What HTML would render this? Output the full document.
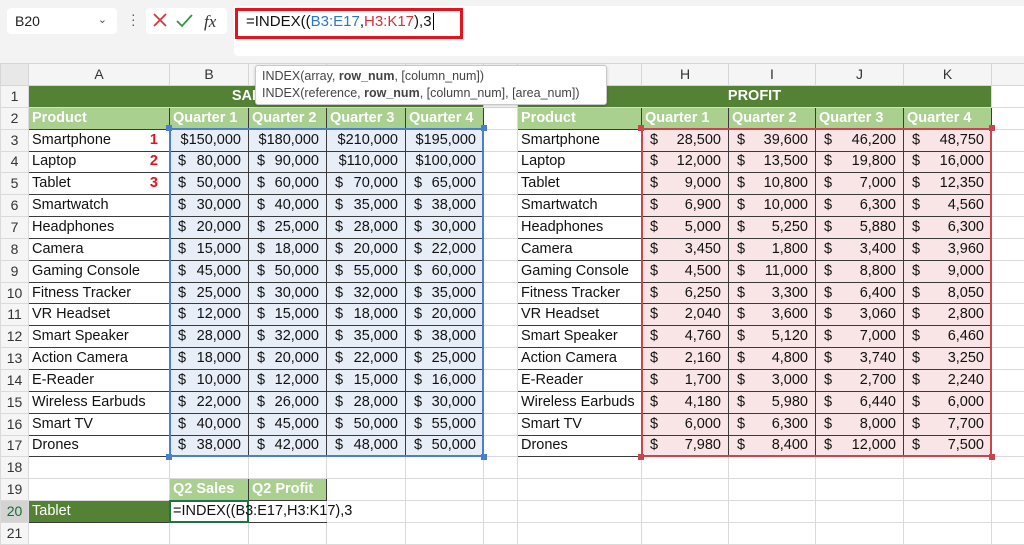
<!DOCTYPE html>
<html><head><meta charset="utf-8"><style>
*{box-sizing:border-box;margin:0;padding:0}
body{width:1024px;height:543px;overflow:hidden;background:#fff;font-family:"Liberation Sans",sans-serif;position:relative}
.top{position:absolute;left:0;top:0;width:1024px;height:63px;background:#f3f3f3}
.nb{position:absolute;left:7px;top:8px;width:110px;height:26px;background:#fff;border-radius:4px;font-size:14px;padding:5px 0 0 8px;color:#222}
.nb i{position:absolute;right:10px;top:5px;font-style:normal;font-size:11px;color:#555}
.dots{position:absolute;left:131px;top:12px;width:3px;font-size:14px;line-height:5px;color:#555}
.btns{position:absolute;left:146px;top:8px;width:81px;height:26px;background:#fff;border-radius:4px}
.fx{position:absolute;left:234px;top:6px;width:790px;height:50px;background:#fff;border-radius:4px 0 0 4px}
.red{position:absolute;left:235px;top:8px;width:228px;height:31px;border:3px solid #e5131d}
.ftext{position:absolute;left:246px;top:13px;font-size:15px;color:#111}
table{position:absolute;left:0;top:63px;width:1024px;border-collapse:collapse;table-layout:fixed;font-size:14.5px}
td{border:1px solid #dadada;height:21.85px;padding:0 3px;white-space:nowrap;overflow:hidden;color:#111;line-height:19px}
tr.h td{height:22px;background:#f5f5f5;color:#333;text-align:center;font-size:14px;border-color:#d6d6d6}
td.r{background:#f5f5f5;text-align:center;color:#333;font-size:14px;padding:0}
td.sel{background:#d3d3d3;color:#1e6b2f}
.dg{background:#548235;color:#fff;font-weight:bold;text-align:center}
.lg{background:#a9d08e;color:#fff;font-weight:bold;border:1px solid #3a3a3a}
.d{border:1px solid #3a3a3a}
.b{background:#e8eef8}
.p{background:#f9e5e5}
.m{text-align:right;padding-right:7px}
.m span{float:left;padding-left:5px}
.n{color:#e5131d;font-weight:bold;float:right;padding-right:8px}
.tip{position:absolute;left:255px;top:65px;width:352px;height:40px;background:#fff;border:1px solid #c8c8c8;border-radius:3px;font-size:12.5px;color:#444;padding:2px 0 0 6px;line-height:17px;box-shadow:0 1px 3px rgba(0,0,0,.2)}
.selb{position:absolute;left:169px;top:128px;width:315px;height:329px;border:2px solid #4a7fd0}
.selr{position:absolute;left:641px;top:128px;width:351px;height:329px;border:2px solid #c9464f}
.sq{position:absolute;width:6px;height:6px}
</style></head><body>
<div class="top">
 <div class="nb">B20<i>&#8964;</i></div>
 <div class="dots">·<br>·<br>·</div>
 <div class="btns">
  <svg width="81" height="26"><path d="M8 6 L20 18 M20 6 L8 18" stroke="#e0323a" stroke-width="1.8"/><path d="M31 13 L36 18 L46 7" stroke="#2e9a3e" stroke-width="1.8" fill="none"/><text x="58" y="19" font-family="Liberation Serif" font-style="italic" font-size="17" fill="#333">fx</text></svg>
 </div>
 <div class="fx"></div>
 <div class="red"></div>
 <div class="ftext">=INDEX((<span style="color:#2b78c8">B3:E17</span>,<span style="color:#d6303a">H3:K17</span>),3<span style="border-left:1px solid #000;margin-left:1px"></span></div>
</div>
<table>
<colgroup><col style="width:28px"><col style="width:141px"><col style="width:79px"><col style="width:78px"><col style="width:79px"><col style="width:78px"><col style="width:34px"><col style="width:124px"><col style="width:87px"><col style="width:87px"><col style="width:88px"><col style="width:88px"><col style="width:33px"></colgroup>
<tr class="h"><td style="background:#e8e8e8"></td><td>A</td><td class="sel">B</td><td>C</td><td>D</td><td>E</td><td>F</td><td>G</td><td>H</td><td>I</td><td>J</td><td>K</td><td></td></tr>
<tr><td class="r">1</td><td colspan="5" class="dg">SALES</td><td></td><td colspan="5" class="dg">PROFIT</td><td></td></tr>
<tr><td class="r">2</td><td class="lg">Product</td><td class="lg">Quarter 1</td><td class="lg">Quarter 2</td><td class="lg">Quarter 3</td><td class="lg">Quarter 4</td><td></td><td class="lg">Product</td><td class="lg">Quarter 1</td><td class="lg">Quarter 2</td><td class="lg">Quarter 3</td><td class="lg">Quarter 4</td><td></td></tr>
<tr><td class="r">3</td><td class="d">Smartphone<span class="n">1</span></td><td class="d b m">$150,000</td><td class="d b m">$180,000</td><td class="d b m">$210,000</td><td class="d b m">$195,000</td><td></td><td class="d">Smartphone</td><td class="d p m"><span>$</span>28,500</td><td class="d p m"><span>$</span>39,600</td><td class="d p m"><span>$</span>46,200</td><td class="d p m"><span>$</span>48,750</td><td></td></tr>
<tr><td class="r">4</td><td class="d">Laptop<span class="n">2</span></td><td class="d b m"><span>$</span>80,000</td><td class="d b m"><span>$</span>90,000</td><td class="d b m">$110,000</td><td class="d b m">$100,000</td><td></td><td class="d">Laptop</td><td class="d p m"><span>$</span>12,000</td><td class="d p m"><span>$</span>13,500</td><td class="d p m"><span>$</span>19,800</td><td class="d p m"><span>$</span>16,000</td><td></td></tr>
<tr><td class="r">5</td><td class="d">Tablet<span class="n">3</span></td><td class="d b m"><span>$</span>50,000</td><td class="d b m"><span>$</span>60,000</td><td class="d b m"><span>$</span>70,000</td><td class="d b m"><span>$</span>65,000</td><td></td><td class="d">Tablet</td><td class="d p m"><span>$</span>9,000</td><td class="d p m"><span>$</span>10,800</td><td class="d p m"><span>$</span>7,000</td><td class="d p m"><span>$</span>12,350</td><td></td></tr>
<tr><td class="r">6</td><td class="d">Smartwatch</td><td class="d b m"><span>$</span>30,000</td><td class="d b m"><span>$</span>40,000</td><td class="d b m"><span>$</span>35,000</td><td class="d b m"><span>$</span>38,000</td><td></td><td class="d">Smartwatch</td><td class="d p m"><span>$</span>6,900</td><td class="d p m"><span>$</span>10,000</td><td class="d p m"><span>$</span>6,300</td><td class="d p m"><span>$</span>4,560</td><td></td></tr>
<tr><td class="r">7</td><td class="d">Headphones</td><td class="d b m"><span>$</span>20,000</td><td class="d b m"><span>$</span>25,000</td><td class="d b m"><span>$</span>28,000</td><td class="d b m"><span>$</span>30,000</td><td></td><td class="d">Headphones</td><td class="d p m"><span>$</span>5,000</td><td class="d p m"><span>$</span>5,250</td><td class="d p m"><span>$</span>5,880</td><td class="d p m"><span>$</span>6,300</td><td></td></tr>
<tr><td class="r">8</td><td class="d">Camera</td><td class="d b m"><span>$</span>15,000</td><td class="d b m"><span>$</span>18,000</td><td class="d b m"><span>$</span>20,000</td><td class="d b m"><span>$</span>22,000</td><td></td><td class="d">Camera</td><td class="d p m"><span>$</span>3,450</td><td class="d p m"><span>$</span>1,800</td><td class="d p m"><span>$</span>3,400</td><td class="d p m"><span>$</span>3,960</td><td></td></tr>
<tr><td class="r">9</td><td class="d">Gaming Console</td><td class="d b m"><span>$</span>45,000</td><td class="d b m"><span>$</span>50,000</td><td class="d b m"><span>$</span>55,000</td><td class="d b m"><span>$</span>60,000</td><td></td><td class="d">Gaming Console</td><td class="d p m"><span>$</span>4,500</td><td class="d p m"><span>$</span>11,000</td><td class="d p m"><span>$</span>8,800</td><td class="d p m"><span>$</span>9,000</td><td></td></tr>
<tr><td class="r">10</td><td class="d">Fitness Tracker</td><td class="d b m"><span>$</span>25,000</td><td class="d b m"><span>$</span>30,000</td><td class="d b m"><span>$</span>32,000</td><td class="d b m"><span>$</span>35,000</td><td></td><td class="d">Fitness Tracker</td><td class="d p m"><span>$</span>6,250</td><td class="d p m"><span>$</span>3,300</td><td class="d p m"><span>$</span>6,400</td><td class="d p m"><span>$</span>8,050</td><td></td></tr>
<tr><td class="r">11</td><td class="d">VR Headset</td><td class="d b m"><span>$</span>12,000</td><td class="d b m"><span>$</span>15,000</td><td class="d b m"><span>$</span>18,000</td><td class="d b m"><span>$</span>20,000</td><td></td><td class="d">VR Headset</td><td class="d p m"><span>$</span>2,040</td><td class="d p m"><span>$</span>3,600</td><td class="d p m"><span>$</span>3,060</td><td class="d p m"><span>$</span>2,800</td><td></td></tr>
<tr><td class="r">12</td><td class="d">Smart Speaker</td><td class="d b m"><span>$</span>28,000</td><td class="d b m"><span>$</span>32,000</td><td class="d b m"><span>$</span>35,000</td><td class="d b m"><span>$</span>38,000</td><td></td><td class="d">Smart Speaker</td><td class="d p m"><span>$</span>4,760</td><td class="d p m"><span>$</span>5,120</td><td class="d p m"><span>$</span>7,000</td><td class="d p m"><span>$</span>6,460</td><td></td></tr>
<tr><td class="r">13</td><td class="d">Action Camera</td><td class="d b m"><span>$</span>18,000</td><td class="d b m"><span>$</span>20,000</td><td class="d b m"><span>$</span>22,000</td><td class="d b m"><span>$</span>25,000</td><td></td><td class="d">Action Camera</td><td class="d p m"><span>$</span>2,160</td><td class="d p m"><span>$</span>4,800</td><td class="d p m"><span>$</span>3,740</td><td class="d p m"><span>$</span>3,250</td><td></td></tr>
<tr><td class="r">14</td><td class="d">E-Reader</td><td class="d b m"><span>$</span>10,000</td><td class="d b m"><span>$</span>12,000</td><td class="d b m"><span>$</span>15,000</td><td class="d b m"><span>$</span>16,000</td><td></td><td class="d">E-Reader</td><td class="d p m"><span>$</span>1,700</td><td class="d p m"><span>$</span>3,000</td><td class="d p m"><span>$</span>2,700</td><td class="d p m"><span>$</span>2,240</td><td></td></tr>
<tr><td class="r">15</td><td class="d">Wireless Earbuds</td><td class="d b m"><span>$</span>22,000</td><td class="d b m"><span>$</span>26,000</td><td class="d b m"><span>$</span>28,000</td><td class="d b m"><span>$</span>30,000</td><td></td><td class="d">Wireless Earbuds</td><td class="d p m"><span>$</span>4,180</td><td class="d p m"><span>$</span>5,980</td><td class="d p m"><span>$</span>6,440</td><td class="d p m"><span>$</span>6,000</td><td></td></tr>
<tr><td class="r">16</td><td class="d">Smart TV</td><td class="d b m"><span>$</span>40,000</td><td class="d b m"><span>$</span>45,000</td><td class="d b m"><span>$</span>50,000</td><td class="d b m"><span>$</span>55,000</td><td></td><td class="d">Smart TV</td><td class="d p m"><span>$</span>6,000</td><td class="d p m"><span>$</span>6,300</td><td class="d p m"><span>$</span>8,000</td><td class="d p m"><span>$</span>7,700</td><td></td></tr>
<tr><td class="r">17</td><td class="d">Drones</td><td class="d b m"><span>$</span>38,000</td><td class="d b m"><span>$</span>42,000</td><td class="d b m"><span>$</span>48,000</td><td class="d b m"><span>$</span>50,000</td><td></td><td class="d">Drones</td><td class="d p m"><span>$</span>7,980</td><td class="d p m"><span>$</span>8,400</td><td class="d p m"><span>$</span>12,000</td><td class="d p m"><span>$</span>7,500</td><td></td></tr>
<tr><td class="r">18</td><td></td><td></td><td></td><td></td><td></td><td></td><td></td><td></td><td></td><td></td><td></td><td></td></tr>
<tr><td class="r">19</td><td></td><td class="lg" style="text-align:left">Q2 Sales</td><td class="lg">Q2 Profit</td><td></td><td></td><td></td><td></td><td></td><td></td><td></td><td></td><td></td></tr>
<tr><td class="r sel">20</td><td style="background:#548235;color:#fff;border:1px solid #3a3a3a">Tablet</td><td colspan="2" style="overflow:visible;border:none;border-bottom:1px solid #3a3a3a;position:relative"><div style="position:absolute;left:-1px;top:-1px;width:80px;height:23px;border:2px solid #217346"></div><span style="position:relative">=INDEX((B3:E17,H3:K17),3</span></td><td></td><td></td><td></td><td></td><td></td><td></td><td></td><td></td><td></td></tr>
<tr><td class="r">21</td><td></td><td></td><td></td><td></td><td></td><td></td><td></td><td></td><td></td><td></td><td></td><td></td></tr>
</table>
<div class="selb"></div>
<div class="sq" style="left:166px;top:125px;background:#4a7fd0"></div><div class="sq" style="left:481px;top:125px;background:#4a7fd0"></div><div class="sq" style="left:166px;top:454px;background:#4a7fd0"></div><div class="sq" style="left:481px;top:454px;background:#4a7fd0"></div>
<div class="selr"></div>
<div class="sq" style="left:638px;top:125px;background:#c9464f"></div><div class="sq" style="left:989px;top:125px;background:#c9464f"></div><div class="sq" style="left:638px;top:454px;background:#c9464f"></div><div class="sq" style="left:989px;top:454px;background:#c9464f"></div>
<div class="tip">INDEX(array, <b>row_num</b>, [column_num])<br>INDEX(reference, <b>row_num</b>, [column_num], [area_num])</div>
</body></html>
